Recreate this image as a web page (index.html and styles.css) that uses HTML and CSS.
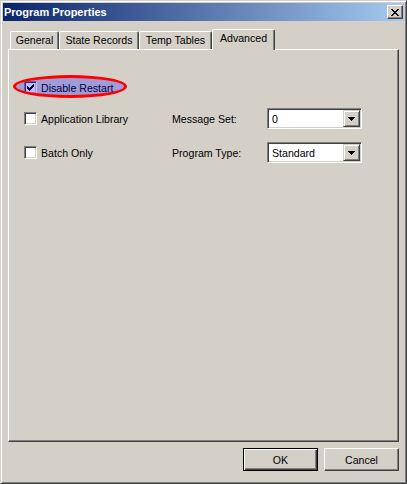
FILE: index.html
```html
<!DOCTYPE html>
<html>
<head>
<meta charset="utf-8">
<title>Program Properties</title>
<link rel="stylesheet" href="styles.css">
</head>
<body>
<div class="window">
  <div class="titlebar">
    <span class="title">Program Properties</span>
    <button class="close"><svg width="8" height="7" viewBox="0 0 8 7" shape-rendering="crispEdges"><path fill="#000" d="M0 0h2v1H0zM6 0h2v1H6zM1 1h2v1H1zM5 1h2v1H5zM2 2h4v1H2zM3 3h2v1H3zM2 4h4v1H2zM1 5h2v1H1zM5 5h2v1H5zM0 6h2v1H0zM6 6h2v1H6z"/></svg></button>
  </div>
  <div class="body">
    <div class="tabs">
      <div class="tab w-general">General</div>
      <div class="tab w-state">State Records</div>
      <div class="tab w-temp">Temp Tables</div>
      <div class="tab w-adv selected">Advanced</div>
    </div>
    <div class="panel">
      <div class="row row1">
        <label class="check"><span class="box"><svg width="7" height="7" viewBox="0 0 7 7" shape-rendering="crispEdges"><path fill="#000" d="M6 0h1v1H6zM5 1h2v1H5zM0 2h1v1H0zM4 2h3v1H4zM0 3h2v1H0zM3 3h3v1H3zM0 4h5v1H0zM1 5h3v1H1zM2 6h1v1H2z"/></svg></span>Disable Restart</label>
        <span class="highlight"></span>
      </div>
      <div class="row row2">
        <label class="check"><span class="box"></span>Application Library</label>
        <span class="lbl">Message Set:</span>
        <div class="select"><span class="val">0</span><span class="ddbtn"><svg width="7" height="4" viewBox="0 0 7 4" shape-rendering="crispEdges"><path fill="#000" d="M0 0h7v1H0zM1 1h5v1H1zM2 2h3v1H2zM3 3h1v1H3z"/></svg></span></div>
      </div>
      <div class="row row3">
        <label class="check"><span class="box"></span>Batch Only</label>
        <span class="lbl">Program Type:</span>
        <div class="select"><span class="val">Standard</span><span class="ddbtn"><svg width="7" height="4" viewBox="0 0 7 4" shape-rendering="crispEdges"><path fill="#000" d="M0 0h7v1H0zM1 1h5v1H1zM2 2h3v1H2zM3 3h1v1H3z"/></svg></span></div>
      </div>
    </div>
    <div class="buttons">
      <button class="btn default">OK</button>
      <button class="btn">Cancel</button>
    </div>
  </div>
</div>
</body>
</html>
```

FILE: styles.css
```css
html, body {
  margin: 0;
  padding: 0;
  background: #d4d0c8;
}

body {
  font-family: "Liberation Sans", Arial, sans-serif;
  font-size: 10.6px;
  color: #000;
}

.window {
  width: 407px;
  height: 484px;
  box-sizing: border-box;
  border: 1px solid;
  border-color: #d4d0c8 #404040 #404040 #d4d0c8;
  box-shadow: inset 1px 1px #fff, inset -1px -1px #808080;
  padding: 2px;
  display: flex;
  flex-direction: column;
  background: #d4d0c8;
}

.titlebar {
  height: 18px;
  display: flex;
  align-items: center;
  justify-content: space-between;
  background: linear-gradient(to right, #0a246a, #a6caf0);
  padding: 0 1px 0 1px;
  color: #fff;
  font-weight: bold;
}

.title {
  font-size: 11px;
  line-height: 18px;
}

.close {
  width: 16px;
  height: 14px;
  padding: 0;
  box-sizing: border-box;
  background: #d4d0c8;
  border: 1px solid;
  border-color: #fff #404040 #404040 #fff;
  box-shadow: inset -1px -1px #808080;
  display: flex;
  align-items: center;
  justify-content: center;
}

.close svg, .box svg, .ddbtn svg {
  display: block;
}

.body {
  flex: 1;
  display: flex;
  flex-direction: column;
  padding: 0 5px;
}

.tabs {
  display: flex;
  align-items: flex-end;
  height: 20px;
  margin-top: 8px;
  padding-left: 2px;
  position: relative;
  z-index: 1;
}

.tab {
  height: 18px;
  box-sizing: border-box;
  border-top: 1px solid #fff;
  border-left: 1px solid #fff;
  border-right: 1px solid #404040;
  box-shadow: inset -1px 0 #808080;
  border-radius: 2px 2px 0 0;
  text-align: center;
  line-height: 17px;
  background: #d4d0c8;
  white-space: nowrap;
}

.w-general { width: 49px; }
.w-state { width: 80px; }
.w-temp { width: 73px; }
.w-adv { width: 63px; }

.tab.selected {
  height: 21px;
  margin-bottom: -1px;
  line-height: 17px;
}

.panel {
  height: 393px;
  box-sizing: border-box;
  border: 1px solid;
  border-color: #fff #404040 #404040 #fff;
  box-shadow: inset -1px -1px #808080;
  padding: 27px 0 0 15px;
}

.row {
  display: grid;
  grid-template-columns: 148px 95px 95px;
  height: 21px;
  align-items: center;
}

.row1 {
  position: relative;
}

.row2 { margin-top: 10px; }
.row3 { margin-top: 13px; }

.check {
  display: flex;
  align-items: center;
  gap: 4px;
  white-space: nowrap;
}

.box {
  width: 13px;
  height: 13px;
  box-sizing: border-box;
  border: 1px solid;
  border-color: #808080 #fff #fff #808080;
  box-shadow: inset 1px 1px #404040, inset -1px -1px #d4d0c8;
  background: #fff;
  display: flex;
  align-items: center;
  justify-content: center;
  flex: none;
}

.highlight {
  position: absolute;
  left: -11px;
  top: -2px;
  width: 114px;
  height: 23px;
  box-sizing: border-box;
  border: 3px solid #f00;
  border-radius: 50%;
  background: rgba(0, 0, 255, 0.25);
  z-index: 2;
}

.lbl {
  white-space: nowrap;
}

.select {
  width: 95px;
  height: 21px;
  box-sizing: border-box;
  border: 1px solid;
  border-color: #808080 #fff #fff #808080;
  box-shadow: inset 1px 1px #404040, inset -1px -1px #d4d0c8;
  background: #fff;
  display: flex;
  align-items: center;
  padding: 1px 1px 1px 4px;
}

.val {
  flex: 1;
}

.ddbtn {
  width: 17px;
  height: 17px;
  box-sizing: border-box;
  background: #d4d0c8;
  border: 1px solid;
  border-color: #d4d0c8 #404040 #404040 #d4d0c8;
  box-shadow: inset 1px 1px #fff, inset -1px -1px #808080;
  display: flex;
  align-items: center;
  justify-content: center;
}

.buttons {
  display: flex;
  justify-content: flex-end;
  gap: 6px;
  margin-top: 6px;
}

.btn {
  width: 75px;
  height: 23px;
  box-sizing: border-box;
  padding: 0;
  font-family: inherit;
  font-size: 10.6px;
  color: #000;
  background: #d4d0c8;
  border: 1px solid;
  border-color: #fff #404040 #404040 #fff;
  box-shadow: inset -1px -1px #808080;
}

.btn.default {
  border-color: #000;
  box-shadow: inset 1px 1px #fff, inset -1px -1px #404040, inset -2px -2px #808080;
}
```
